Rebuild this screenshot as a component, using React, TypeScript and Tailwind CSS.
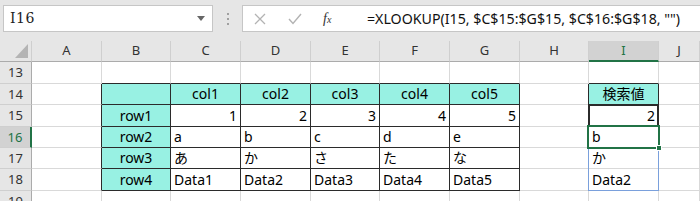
import React from "react";

const colW = [32, 70, 69, 70, 70, 69, 70, 70, 69, 70, 41];
const colNames = ["", "A", "B", "C", "D", "E", "F", "G", "H", "I", "J"];
const rows = [13, 14, 15, 16, 17, 18, 19];
const rowH: Record<number, number> = { 13: 22, 14: 21, 15: 22, 16: 21, 17: 21, 18: 22, 19: 22 };

type Cell = { v: string; align?: "l" | "c" | "r"; fill?: boolean };
const data: Record<string, Cell> = {
  "2-14": { v: "", fill: true },
  "3-14": { v: "col1", align: "c", fill: true },
  "4-14": { v: "col2", align: "c", fill: true },
  "5-14": { v: "col3", align: "c", fill: true },
  "6-14": { v: "col4", align: "c", fill: true },
  "7-14": { v: "col5", align: "c", fill: true },
  "2-15": { v: "row1", align: "c", fill: true },
  "2-16": { v: "row2", align: "c", fill: true },
  "2-17": { v: "row3", align: "c", fill: true },
  "2-18": { v: "row4", align: "c", fill: true },
  "3-15": { v: "1", align: "r" },
  "4-15": { v: "2", align: "r" },
  "5-15": { v: "3", align: "r" },
  "6-15": { v: "4", align: "r" },
  "7-15": { v: "5", align: "r" },
  "3-16": { v: "a" },
  "4-16": { v: "b" },
  "5-16": { v: "c" },
  "6-16": { v: "d" },
  "7-16": { v: "e" },
  "3-17": { v: "あ" },
  "4-17": { v: "か" },
  "5-17": { v: "さ" },
  "6-17": { v: "た" },
  "7-17": { v: "な" },
  "3-18": { v: "Data1" },
  "4-18": { v: "Data2" },
  "5-18": { v: "Data3" },
  "6-18": { v: "Data4" },
  "7-18": { v: "Data5" },
  "9-14": { v: "検索値", align: "c", fill: true },
  "9-15": { v: "2", align: "r" },
  "9-16": { v: "b" },
  "9-17": { v: "か" },
  "9-18": { v: "Data2" },
};

const GRID = "#d9d9d9";
const DARK = "#2b2b2b";

function inTable(c: number, r: number) {
  return (c >= 2 && c <= 7 && r >= 14 && r <= 18) || (c === 9 && r >= 14 && r <= 15);
}

function rightDark(c: number, r: number) {
  return inTable(c, r) || inTable(c + 1, r);
}
function bottomDark(c: number, r: number) {
  return inTable(c, r) || inTable(c, r + 1);
}

const font = { fontFamily: '"Noto Sans", "Noto Sans CJK JP", sans-serif' };

export default function App() {
  return (
    <div className="relative w-[700px] h-[201px] overflow-hidden bg-white" style={font}>
      {/* toolbar */}
      <div className="h-[41px] bg-[#e6e6e6] flex items-start pt-[5px] pl-[3px]">
        <div className="w-[210px] h-[27px] bg-white border border-[#c6c6c6] flex items-center justify-between pl-[6px] pr-[6px]">
          <span className="text-[14px] text-[#222] tracking-[0.5px]" style={{ fontFamily: '"DejaVu Serif", serif' }}>
            I16
          </span>
          <svg width="8" height="5" viewBox="0 0 8 5" className="mr-[1px]">
            <path d="M0 0 L8 0 L4 5 Z" fill="#666" />
          </svg>
        </div>
        <div className="w-[29px] h-[27px] flex flex-col items-center justify-center gap-[3px]">
          <span className="w-[2px] h-[2px] bg-[#a0a0a0]" />
          <span className="w-[2px] h-[2px] bg-[#a0a0a0]" />
          <span className="w-[2px] h-[2px] bg-[#a0a0a0]" />
        </div>
        <div className="flex-1 h-[27px] bg-white border border-[#c6c6c6] border-r-0 flex items-center">
          <div className="w-[115px] flex items-center">
            <svg width="12" height="12" viewBox="0 0 12 12" className="ml-[11px]">
              <path d="M1 1 L11 11 M11 1 L1 11" stroke="#b3b3b3" strokeWidth="1.3" />
            </svg>
            <svg width="14" height="12" viewBox="0 0 14 12" className="ml-[22px]">
              <path d="M1 6 L5 10.5 L13 1" stroke="#b3b3b3" strokeWidth="1.4" fill="none" />
            </svg>
            <span
              className="ml-[21px] text-[14px] text-[#333] italic"
              style={{ fontFamily: '"Liberation Serif", serif' }}
            >
              f<span className="text-[10px]">x</span>
            </span>
          </div>
          <span className="ml-[9px] text-[14.2px] text-[#111] whitespace-nowrap">
            =XLOOKUP(I15, $C$15:$G$15, $C$16:$G$18, "")
          </span>
        </div>
      </div>

      {/* column headers */}
      <div className="flex h-[21px] bg-[#e6e6e6]">
        {colW.map((w, c) => {
          const sel = c === 9;
          return (
            <div
              key={c}
              style={{ width: w }}
              className={
                "shrink-0 flex items-center justify-center text-[13px] border-r border-[#cfcfcf] " +
                (sel
                  ? "bg-[#d2d2d2] text-[#217346] border-b-2 border-b-[#217346]"
                  : "text-[#333] border-b border-b-[#ababab]")
              }
            >
              {c === 0 ? (
                <svg width="30" height="20" viewBox="0 0 30 20">
                  <path d="M27 3 L27 17 L14 17 Z" fill="#b4b4b4" />
                </svg>
              ) : (
                colNames[c]
              )}
            </div>
          );
        })}
      </div>

      {/* rows */}
      {rows.map((r) => (
        <div key={r} className="flex" style={{ height: rowH[r] }}>
          {colW.map((w, c) => {
            if (c === 0) {
              const sel = r === 16;
              return (
                <div
                  key={c}
                  style={{ width: w }}
                  className={
                    "shrink-0 flex items-start pt-[1px] justify-center text-[13px] border-b border-b-[#cfcfcf] " +
                    (sel
                      ? "bg-[#d2d2d2] text-[#217346] border-r-2 border-r-[#217346]"
                      : "bg-[#e6e6e6] text-[#333] border-r border-r-[#ababab]")
                  }
                >
                  {r}
                </div>
              );
            }
            const d = data[`${c}-${r}`];
            const align = d?.align ?? "l";
            return (
              <div
                key={c}
                style={{
                  width: w,
                  borderRightColor: rightDark(c, r) ? DARK : GRID,
                  borderBottomColor: bottomDark(c, r) ? DARK : GRID,
                }}
                className={
                  "shrink-0 border-r border-b flex items-end pb-[1px] text-[14px] text-black leading-[18px] whitespace-nowrap overflow-hidden " +
                  (align === "c" ? "justify-center " : align === "r" ? "justify-end pr-[3px] " : "justify-start pl-[3px] ") +
                  (d?.fill ? "bg-[#98f1e3]" : "bg-white")
                }
              >
                {d?.v}
              </div>
            );
          })}
        </div>
      ))}

      {/* I15 medium border */}
      <div className="absolute left-[588px] top-[104px] w-[71px] h-[23px] border-2 border-[#2b2b2b] pointer-events-none" />
      {/* spill range I16:I18 */}
      <div className="absolute left-[588px] top-[126px] w-[71px] h-[65px] border border-[#7aa0dc] pointer-events-none" />
      {/* active cell */}
      <div className="absolute left-[587px] top-[125px] w-[73px] h-[24px] border-2 border-[#217346] pointer-events-none" />
      <div className="absolute left-[656px] top-[145px] w-[6px] h-[6px] bg-[#217346] border border-white pointer-events-none" />
    </div>
  );
}
